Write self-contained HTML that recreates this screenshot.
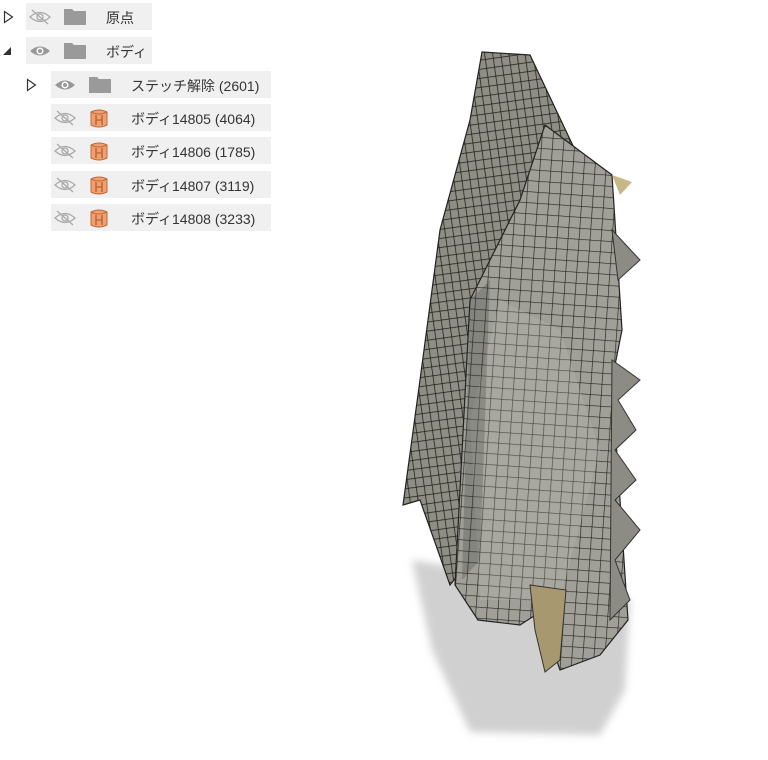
<!DOCTYPE html>
<html><head><meta charset="utf-8"><style>
html,body{margin:0;padding:0;background:#fff;width:768px;height:760px;overflow:hidden;font-family:"Liberation Sans","Noto Sans CJK JP",sans-serif;}
.row{position:absolute;height:27px;background:#f0f0f0;font-size:14px;color:#333;}
.row span{position:absolute;top:5px;}
svg{position:absolute;left:0;top:0;}
</style></head><body>

<svg width="768" height="760" viewBox="0 0 768 760">
<defs>
<pattern id="g" width="8" height="9" patternUnits="userSpaceOnUse" patternTransform="rotate(-8)">
<rect width="8" height="9" fill="#8e8e85"/>
<path d="M0 0H8M0 0V9" stroke="#1e1e1a" stroke-width="1.5"/>
</pattern>
<pattern id="g2" width="11" height="11" patternUnits="userSpaceOnUse" patternTransform="rotate(4)">
<rect width="11" height="11" fill="#a0a098"/>
<path d="M0 0H11M0 0V11" stroke="#24241f" stroke-width="1.3"/>
</pattern>
<filter id="b"><feGaussianBlur stdDeviation="4"/></filter>
</defs>
<polygon points="412,560 520,578 630,600 625,690 600,735 470,732 432,650" fill="#d0d0d0" filter="url(#b)"/>
<polygon points="482,52 530,55 575,150 545,200 470,560 450,585 420,500 403,505 420,380 440,230 470,120" fill="url(#g)" stroke="#222" stroke-width="1.2"/>
<polygon points="545,125 612,175 622,330 612,380 628,620 600,655 560,670 540,612 520,625 478,620 455,585 470,300 520,200" fill="url(#g2)" stroke="#222" stroke-width="1.2"/>
<polygon points="500,300 560,330 600,450 560,600 480,600 470,420" fill="#c0c0b8" opacity="0.25"/>
<polygon points="470,300 490,280 480,560 462,580" fill="#333" opacity="0.25"/>
<polygon points="530,585 566,590 560,660 545,672 535,630" fill="#a89870" stroke="#333"/>
<polygon points="612,175 632,182 620,195" fill="#c8b888"/>
<polygon points="612,230 640,260 618,280" fill="#8c8c84" stroke="#333"/>
<polygon points="612,360 640,380 618,400 636,430 615,450 636,480 615,500 640,530 615,560 630,600 610,620" fill="#8c8c84" stroke="#333"/>
</svg>

<svg width="12" height="14" style="left:3px;top:10px"><path d="M1.5 1.5 L9.5 7 L1.5 12.5Z" fill="none" stroke="#333" stroke-width="1.2"/></svg>
<div class="row" style="left:26px;top:3px;width:126px"><span style="left:80px">原点</span></div>
<svg width="10" height="10" style="left:2px;top:46px"><path d="M9 1 V9 H1Z" fill="#333"/></svg>
<div class="row" style="left:26px;top:37px;width:126px"><span style="left:80px">ボディ</span></div>
<svg width="12" height="14" style="left:26px;top:78px"><path d="M1.5 1.5 L9.5 7 L1.5 12.5Z" fill="none" stroke="#333" stroke-width="1.2"/></svg>
<div class="row" style="left:51px;top:71px;width:220px"><span style="left:80px">ステッチ解除 (2601)</span></div>
<div class="row" style="left:51px;top:104px;width:220px"><span style="left:80px">ボディ14805 (4064)</span></div>
<div class="row" style="left:51px;top:137px;width:220px"><span style="left:80px">ボディ14806 (1785)</span></div>
<div class="row" style="left:51px;top:171px;width:220px"><span style="left:80px">ボディ14807 (3119)</span></div>
<div class="row" style="left:51px;top:204px;width:220px"><span style="left:80px">ボディ14808 (3233)</span></div>

<svg width="300" height="240" style="left:0;top:0">
<defs>
<g id="eyeoff"><path d="M-10 0 Q0 -9 10 0 Q0 9 -10 0Z" fill="none" stroke="#aaa" stroke-width="1.3"/><circle r="3" fill="none" stroke="#aaa" stroke-width="1.3"/><path d="M-8 -7 L8 7" stroke="#aaa" stroke-width="1.3"/></g>
<g id="eyeon"><path d="M-10 0 Q0 -9 10 0 Q0 9 -10 0Z" fill="#999"/><circle r="3.5" fill="#fff"/><circle r="2" fill="#999"/></g>
<g id="fold"><path d="M-11 -8 H-3 L-1 -6 H11 V8 H-11Z" fill="#9a9a9a"/></g>
<g id="body"><path d="M-8 -6 Q0 -10 8 -6 V7 Q0 11 -8 7Z" fill="#f0a070" stroke="#c06a3a"/><path d="M-8 -6 Q0 -2 8 -6" fill="none" stroke="#c06a3a"/><path d="M-3 -3 V7 M3 -3 V7 M-3 2 H3" stroke="#c06a3a" stroke-width="1.6"/></g>
</defs>
<use href="#eyeoff" x="40" y="17"/><use href="#fold" x="75" y="17"/>
<use href="#eyeon" x="40" y="51"/><use href="#fold" x="75" y="51"/>
<use href="#eyeon" x="65" y="85"/><use href="#fold" x="100" y="85"/>
<use href="#eyeoff" x="65" y="118"/><use href="#body" x="99" y="118"/>
<use href="#eyeoff" x="65" y="151"/><use href="#body" x="99" y="151"/>
<use href="#eyeoff" x="65" y="185"/><use href="#body" x="99" y="185"/>
<use href="#eyeoff" x="65" y="218"/><use href="#body" x="99" y="218"/>
</svg>
</body></html>
